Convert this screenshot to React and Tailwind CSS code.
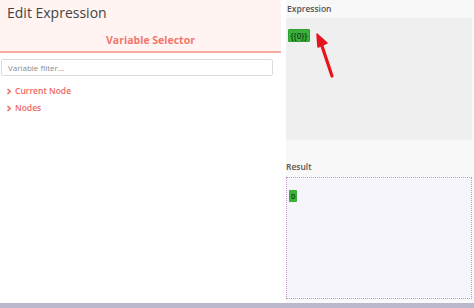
export default function App() {
  return (
    <div className="w-[474px] h-[308px] overflow-hidden bg-white flex flex-col" style={{ fontFamily: '"Open Sans", "Noto Sans", sans-serif' }}>
      <div className="flex flex-1 min-h-0">
        {/* Left panel */}
        <div className="w-[281px] flex flex-col">
          <div className="h-[53px] bg-[#fff4f1] border-b-2 border-[#f6aaa2] flex flex-col">
            <div className="pl-[7px] pt-[3px] text-[14px] leading-[20px] text-[#444]">Edit Expression</div>
            <div className="pl-[20px] mt-[9px] text-center text-[10.5px] font-bold text-[#f2776d] leading-[16px]">Variable Selector</div>
          </div>
          <div className="mt-[6px] ml-[1px] w-[272px] h-[17px] border border-[#dcdcdc] rounded-[2px] flex items-center pl-[6px] text-[8px] text-[#8a8a8a]">
            Variable filter...
          </div>
          <div className="mt-[9px] pl-[6px] flex flex-col gap-[5px]">
            <div className="flex items-center h-[12px] text-[8.5px] font-semibold text-[#f0685e]">
              <svg width="6" height="7" viewBox="0 0 6 7" className="mr-[3px]"><path d="M1.5 1 L4.2 3.5 L1.5 6" fill="none" stroke="#f0685e" strokeWidth="1.5" /></svg>
              Current Node
            </div>
            <div className="flex items-center h-[12px] text-[8.5px] font-semibold text-[#f0685e]">
              <svg width="6" height="7" viewBox="0 0 6 7" className="mr-[3px]"><path d="M1.5 1 L4.2 3.5 L1.5 6" fill="none" stroke="#f0685e" strokeWidth="1.5" /></svg>
              Nodes
            </div>
          </div>
        </div>
        {/* Right panel */}
        <div className="ml-[5px] flex-1 bg-[#f8f8f8] flex flex-col pr-[2px]">
          <div className="h-[18px] flex items-center pl-[1px] pt-[1px] text-[8.5px] font-semibold text-[#555]">Expression</div>
          <div className="h-[122px] bg-[#efefef] relative pt-[3px] pl-[2px]">
            <span className="inline-block bg-[#3bb03b] text-[#0c3d0c] text-[8px] font-semibold leading-[11px] px-[1.5px] rounded-[1px] border border-[#2f9f30]">{'{{0}}'}</span>
            <svg className="absolute left-[26px] top-[13px]" width="30" height="50" viewBox="0 0 30 50">
              <path d="M20 45 L9 12" stroke="#e8141c" strokeWidth="3.2" strokeLinecap="round" />
              <path d="M5 3 L15 12 L6 16 Z" fill="#e8141c" stroke="#e8141c" strokeWidth="1.5" strokeLinejoin="round" />
            </svg>
          </div>
          <div className="h-[37px] flex items-end pb-[3px] text-[8.5px] font-semibold text-[#555]">Result</div>
          <div className="h-[122px] bg-[#f7f5fc] border border-dotted border-[#c49ac0] pt-[3px] pl-[2px]">
            <span className="inline-block bg-[#3bb03b] text-[#0c3d0c] text-[7.5px] font-semibold leading-[12px] px-[2px] rounded-[1px]">0</span>
          </div>
        </div>
      </div>
      <div className="h-[5px] bg-[#bcb8cb]" />
    </div>
  );
}
